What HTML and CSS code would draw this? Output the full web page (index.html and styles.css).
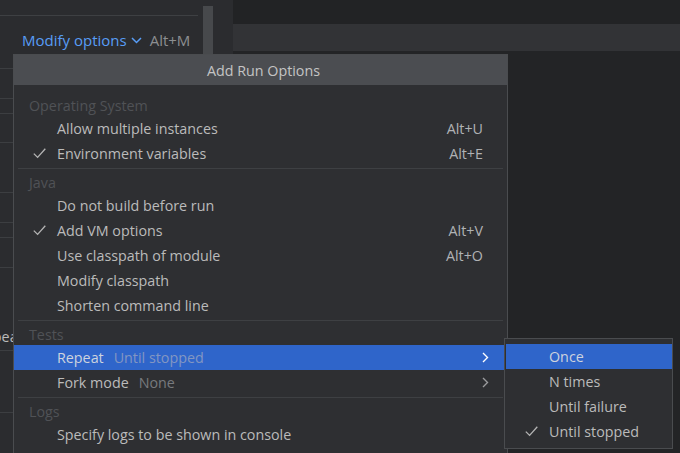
FILE: index.html
```html
<!DOCTYPE html>
<html>
<head>
<meta charset="utf-8">
<link rel="stylesheet" href="styles.css">
</head>
<body>
<div class="screen">
  <div class="dialog">
    <div class="dlg-rule"></div>
    <div class="modify-row">
      <span class="link">Modify options</span>
      <svg class="chev-down" width="11" height="7" viewBox="0 0 11 7"><polyline points="1,1 5.5,5.5 10,1" fill="none" stroke="#589df6" stroke-width="1.5"/></svg>
      <span class="kbd-dim">Alt+M</span>
    </div>
    <div class="fields">
      <div class="field h30"></div>
      <div class="field h15"></div>
      <div class="field h29"></div>
      <div class="field h50"></div>
      <div class="field h30"></div>
      <div class="field h15"></div>
      <div class="field h30"></div>
      <div class="field h83"><span class="hidden-label">Repeat:</span></div>
      <div class="field h62"></div>
      <div class="field h40"></div>
    </div>
    <div class="scrollbar"></div>
  </div>
  <div class="ide-right">
    <div class="strip-top"></div>
    <div class="strip-tabs"></div>
    <div class="editor"></div>
  </div>

  <div class="popup">
    <div class="popup-title">Add Run Options</div>
    <div class="popup-body">
      <div class="group-title first">Operating System</div>
      <div class="item"><span class="check"></span><span class="label">Allow multiple instances</span><span class="kbd">Alt+U</span></div>
      <div class="item"><span class="check"><svg width="13" height="11" viewBox="0 0 13 11"><polyline points="0.8,5.6 4.6,9.4 12.3,0.8" fill="none" stroke="#b4b4b4" stroke-width="1.3"/></svg></span><span class="label">Environment variables</span><span class="kbd">Alt+E</span></div>
      <div class="sep"></div>
      <div class="group-title">Java</div>
      <div class="item"><span class="check"></span><span class="label">Do not build before run</span></div>
      <div class="item"><span class="check"><svg width="13" height="11" viewBox="0 0 13 11"><polyline points="0.8,5.6 4.6,9.4 12.3,0.8" fill="none" stroke="#b4b4b4" stroke-width="1.3"/></svg></span><span class="label">Add VM options</span><span class="kbd">Alt+V</span></div>
      <div class="item"><span class="check"></span><span class="label">Use classpath of module</span><span class="kbd">Alt+O</span></div>
      <div class="item"><span class="check"></span><span class="label">Modify classpath</span></div>
      <div class="item"><span class="check"></span><span class="label">Shorten command line</span></div>
      <div class="sep"></div>
      <div class="group-title">Tests</div>
      <div class="item selected"><span class="check"></span><span class="label">Repeat</span><span class="hint">Until stopped</span><svg class="arrow" width="7" height="11" viewBox="0 0 7 11"><polyline points="1,1 5.5,5.5 1,10" fill="none" stroke="#ffffff" stroke-width="1.4"/></svg></div>
      <div class="item"><span class="check"></span><span class="label">Fork mode</span><span class="hint">None</span><svg class="arrow" width="7" height="11" viewBox="0 0 7 11"><polyline points="1,1 5.5,5.5 1,10" fill="none" stroke="#9a9b9d" stroke-width="1.4"/></svg></div>
      <div class="sep"></div>
      <div class="group-title">Logs</div>
      <div class="item"><span class="check"></span><span class="label">Specify logs to be shown in console</span></div>
    </div>
  </div>

  <div class="submenu">
    <div class="item selected"><span class="check"></span><span class="label">Once</span></div>
    <div class="item"><span class="check"></span><span class="label">N times</span></div>
    <div class="item"><span class="check"></span><span class="label">Until failure</span></div>
    <div class="item"><span class="check"><svg width="13" height="11" viewBox="0 0 13 11"><polyline points="0.8,5.6 4.6,9.4 12.3,0.8" fill="none" stroke="#b4b4b4" stroke-width="1.3"/></svg></span><span class="label">Until stopped</span></div>
  </div>
</div>
</body>
</html>
```

FILE: styles.css
```css
* { box-sizing: border-box; }

html, body {
  margin: 0;
  padding: 0;
  background: #232426;
}

body {
  font-family: "Open Sans", "Noto Sans", "Liberation Sans", sans-serif;
  font-size: 14.3px;
  color: #bbbbbb;
}

.screen {
  position: relative;
  width: 680px;
  height: 453px;
  overflow: hidden;
  display: grid;
  grid-template-columns: 233px 1fr;
}

/* ---------- dialog behind the popup ---------- */
.dialog {
  position: relative;
  background: #2b2c2f;
  display: flex;
  flex-direction: column;
}

.dlg-rule {
  width: 198px;
  height: 16px;
  border-bottom: 1px solid #3e4043;
}

.modify-row {
  display: flex;
  align-items: center;
  height: 22px;
  margin-top: 13px;
  padding-left: 22px;
  white-space: nowrap;
}

.link {
  color: #589df6;
  font-size: 15px;
}

.chev-down {
  margin-left: 4px;
  margin-top: 1px;
}

.kbd-dim {
  margin-left: 8px;
  color: #8c8e91;
  font-size: 15px;
}

.fields {
  margin-top: 17px;
  display: flex;
  flex-direction: column;
}

.field {
  border-top: 1px solid #3c3e41;
  position: relative;
  overflow: hidden;
  white-space: nowrap;
}

.h15 { height: 15px; }
.h29 { height: 29px; }
.h30 { height: 30px; }
.h40 { height: 40px; }
.h50 { height: 50px; }
.h62 { height: 62px; }
.h83 { height: 83px; }

.hidden-label {
  display: block;
  margin-left: -24px;
  margin-top: 59px;
  color: #bbbbbb;
}

.scrollbar {
  position: absolute;
  left: 203px;
  top: 6px;
  width: 10px;
  height: 48px;
  background: #47494c;
}

/* ---------- right IDE area ---------- */
.ide-right {
  display: flex;
  flex-direction: column;
}

.strip-top {
  height: 24px;
  background: #222325;
}

.strip-tabs {
  height: 27px;
  background: #323336;
}

.editor {
  flex: 1;
  background: #232426;
}

/* ---------- popup ---------- */
.popup {
  position: absolute;
  left: 13px;
  top: 54px;
  width: 495px;
  height: 420px;
  background: #2e2f32;
  border: 1px solid #4a4c4f;
}

.popup-title {
  height: 30px;
  background: #4b4d51;
  display: flex;
  align-items: center;
  justify-content: center;
  padding-left: 6px;
  color: #c4c4c4;
}

.popup-body {
  display: flex;
  flex-direction: column;
}

.group-title {
  height: 22px;
  display: flex;
  align-items: center;
  padding-left: 15px;
  color: #505256;
}

.group-title.first {
  margin-top: 9px;
}

.sep {
  height: 1px;
  margin: 2px 4px;
  background: #3e4043;
}

.item {
  height: 25px;
  display: flex;
  align-items: center;
  padding-left: 19px;
  padding-right: 18px;
  white-space: nowrap;
}

.check {
  width: 24px;
  flex: none;
  display: flex;
  align-items: center;
}

.label {
  color: #bbbbbb;
}

.hint {
  margin-left: 10px;
  color: #787a7e;
}

.kbd {
  margin-left: auto;
  margin-right: 6px;
  color: #b0b2b5;
}

.arrow {
  margin-left: auto;
}

.item.selected {
  background: #2f65ca;
}

.item.selected .label {
  color: #cdd3de;
}

.item.selected .hint {
  color: #8296c2;
}

/* ---------- submenu ---------- */
.submenu {
  position: absolute;
  left: 504px;
  top: 338px;
  width: 169px;
  height: 111px;
  background: #2e2f32;
  border: 1px solid #4a4c4f;
  padding: 5px 0 4px 1px;
  display: flex;
  flex-direction: column;
}
```
